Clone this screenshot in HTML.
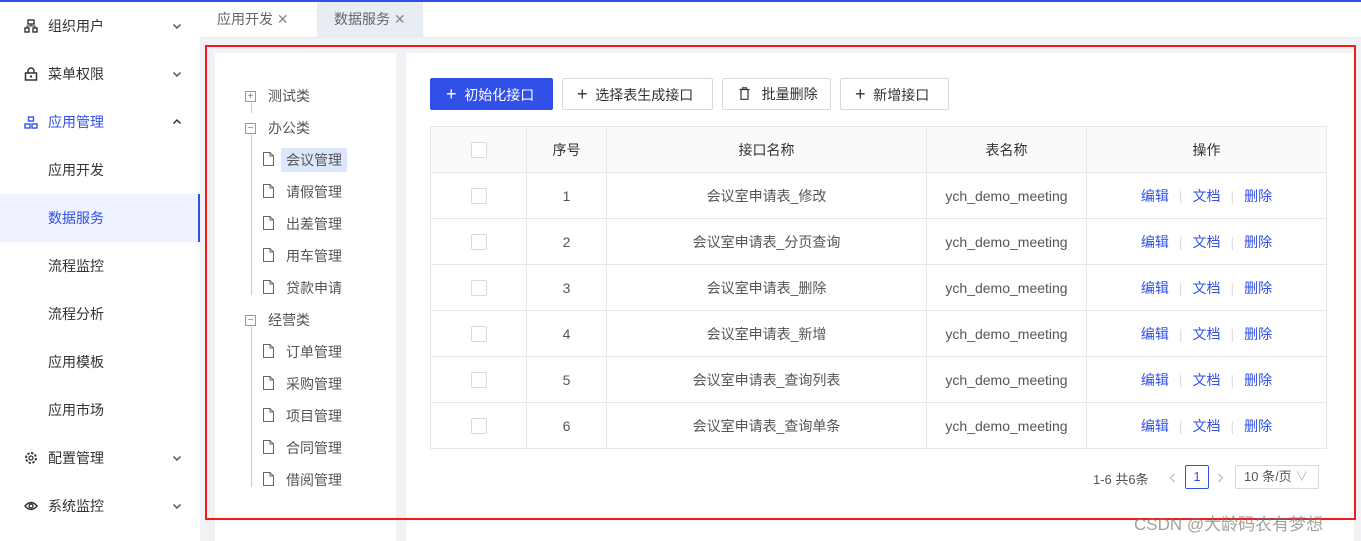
<!DOCTYPE html>
<html><head><meta charset="utf-8"><style>
*{margin:0;padding:0;box-sizing:border-box}
body{width:1361px;height:541px;overflow:hidden;background:#f0f2f5;font-family:"Liberation Sans","Noto Sans CJK SC",sans-serif;font-size:14px;color:#333;position:relative}
.abs{position:absolute}
.topline{left:0;top:0;width:1361px;height:2px;background:#3050e8}
.side{left:0;top:2px;width:200px;height:539px;background:#fff}
.mi{position:absolute;left:0;width:198px;height:48px;line-height:48px;font-size:14px;color:#333}
.mi .t{position:absolute;left:48px}
.mi .ic{position:absolute;left:24px;top:17px;width:14px;height:14px}
.mi .ar{position:absolute;left:172px;top:20px;width:10px;height:8px}
.tabs{left:200px;top:2px;width:1161px;height:36px;background:#fff;border-bottom:1px solid #e8e8e8}
.tab{position:absolute;top:0;height:36px;line-height:34px;font-size:14px;color:#666;padding-left:17px}
.red{left:205px;top:45px;width:1151px;height:475px;border:2.5px solid #f21b1b}
.tree{left:215px;top:53px;width:181px;height:488px;background:#fff}
.main{left:406px;top:53px;width:948px;height:488px;background:#fff}
.tn{position:absolute;font-size:14px;color:#555;height:24px;line-height:24px}
.box{position:absolute;width:11px;height:11px;border:1px solid #999;font-size:10px;line-height:9px;text-align:center;color:#777}
.file{position:absolute;width:11px;height:14px}
.vl{position:absolute;width:1px;background:#ccc}
.btn{position:absolute;top:78px;height:32px;border:1px solid #d9d9d9;background:#fff;border-radius:2px;line-height:30px;font-size:14px;color:#333}
table{position:absolute;left:430px;top:126px;width:897px;border-collapse:collapse;font-size:14px}
td,th{border:1px solid #e8e8e8;height:46px;text-align:center;font-weight:normal;color:#555}
th{background:#fafafa;color:#333}
.cb{display:inline-block;width:16px;height:16px;border:1px solid #d9d9d9;border-radius:2px;vertical-align:middle;background:#fff}
.lk{color:#3050e8}
.sep{color:#ddd;margin:0 10px}
</style></head><body>
<svg width="0" height="0" style="position:absolute"><defs>
<symbol id="dn" viewBox="0 0 10 8"><path d="M1.5 2.5L5 6L8.5 2.5" fill="none" stroke="#555" stroke-width="1.5"/></symbol>
<symbol id="up" viewBox="0 0 10 8"><path d="M1.5 5.5L5 2L8.5 5.5" fill="none" stroke="#333" stroke-width="1.5"/></symbol>
<symbol id="fl" viewBox="0 0 11 14"><path d="M0.5 0.5H7L10.5 4V13.5H0.5Z M7 0.5V4H10.5" fill="none" stroke="#666"/></symbol>
</defs></svg>
<div class="abs topline"></div>
<div class="abs side">
 <div class="mi" style="top:0"><svg class="ic" viewBox="0 0 14 14"><rect x="4" y="1" width="6" height="4" fill="none" stroke="#333" stroke-width="1.4"/><rect x="1" y="9" width="4" height="4" fill="none" stroke="#333" stroke-width="1.4"/><rect x="9" y="9" width="4" height="4" fill="none" stroke="#333" stroke-width="1.4"/><path d="M7 5v2M3 9V7h8v2" stroke="#333" fill="none"/></svg><span class="t">组织用户</span><svg class="ar"><use href="#dn"/></svg></div>
 <div class="mi" style="top:48px"><svg class="ic" viewBox="0 0 14 14"><rect x="1.5" y="6" width="11" height="7" fill="none" stroke="#333" stroke-width="1.5"/><path d="M4 6V4a3 3 0 0 1 6 0v2" fill="none" stroke="#333" stroke-width="1.5"/><rect x="6" y="8.5" width="2" height="2" fill="#333"/></svg><span class="t">菜单权限</span><svg class="ar"><use href="#dn"/></svg></div>
 <div class="mi" style="top:96px;color:#3050e8"><svg class="ic" viewBox="0 0 14 14"><rect x="4.5" y="2" width="5" height="4" fill="none" stroke="#3050e8" stroke-width="1.4"/><rect x="1" y="9" width="5" height="4" fill="none" stroke="#3050e8" stroke-width="1.4"/><rect x="8" y="9" width="5" height="4" fill="none" stroke="#3050e8" stroke-width="1.4"/></svg><span class="t">应用管理</span><svg class="ar"><use href="#up"/></svg></div>
 <div class="mi" style="top:144px"><span class="t">应用开发</span></div>
 <div class="mi" style="top:192px;background:#eef3ff;color:#3050e8;border-right:2px solid #3050e8;width:200px"><span class="t">数据服务</span></div>
 <div class="mi" style="top:240px"><span class="t">流程监控</span></div>
 <div class="mi" style="top:288px"><span class="t">流程分析</span></div>
 <div class="mi" style="top:336px"><span class="t">应用模板</span></div>
 <div class="mi" style="top:384px"><span class="t">应用市场</span></div>
 <div class="mi" style="top:432px"><svg class="ic" viewBox="0 0 14 14"><circle cx="7" cy="7" r="5" fill="none" stroke="#333" stroke-width="1.8" stroke-dasharray="2.5 1.4"/><circle cx="7" cy="7" r="2" fill="none" stroke="#333" stroke-width="1.3"/></svg><span class="t">配置管理</span><svg class="ar"><use href="#dn"/></svg></div>
 <div class="mi" style="top:480px"><svg class="ic" viewBox="0 0 14 14"><path d="M1 7Q7 0 13 7Q7 14 1 7Z" fill="none" stroke="#333" stroke-width="1.4"/><circle cx="7" cy="7" r="2" fill="none" stroke="#333" stroke-width="1.4"/></svg><span class="t">系统监控</span><svg class="ar"><use href="#dn"/></svg></div>
</div>
<div class="abs tabs">
 <div class="tab" style="left:0;width:117px">应用开发 <span style="color:#888">✕</span></div>
 <div class="tab" style="left:117px;width:106px;background:#e8ecf5;color:#666">数据服务 <span style="color:#888">✕</span></div>
</div>
<div class="abs tree">
 <div class="box" style="left:30px;top:38px">+</div><div class="tn" style="left:53px;top:31px">测试类</div>
 <div class="vl" style="left:36px;top:50px;height:10px"></div>
 <div class="box" style="left:30px;top:70px">−</div><div class="tn" style="left:53px;top:63px">办公类</div>
 <div class="vl" style="left:36px;top:82px;height:160px"></div>
 <svg class="file" style="left:48px;top:99px"><use href="#fl"/></svg><div class="tn" style="left:66px;top:95px;background:#dde7fb;padding:0 5px;border-radius:2px">会议管理</div>
 <svg class="file" style="left:48px;top:131px"><use href="#fl"/></svg><div class="tn" style="left:71px;top:127px">请假管理</div>
 <svg class="file" style="left:48px;top:163px"><use href="#fl"/></svg><div class="tn" style="left:71px;top:159px">出差管理</div>
 <svg class="file" style="left:48px;top:195px"><use href="#fl"/></svg><div class="tn" style="left:71px;top:191px">用车管理</div>
 <svg class="file" style="left:48px;top:227px"><use href="#fl"/></svg><div class="tn" style="left:71px;top:223px">贷款申请</div>
 <div class="box" style="left:30px;top:262px">−</div><div class="tn" style="left:53px;top:255px">经营类</div>
 <div class="vl" style="left:36px;top:274px;height:160px"></div>
 <svg class="file" style="left:48px;top:291px"><use href="#fl"/></svg><div class="tn" style="left:71px;top:287px">订单管理</div>
 <svg class="file" style="left:48px;top:323px"><use href="#fl"/></svg><div class="tn" style="left:71px;top:319px">采购管理</div>
 <svg class="file" style="left:48px;top:355px"><use href="#fl"/></svg><div class="tn" style="left:71px;top:351px">项目管理</div>
 <svg class="file" style="left:48px;top:387px"><use href="#fl"/></svg><div class="tn" style="left:71px;top:383px">合同管理</div>
 <svg class="file" style="left:48px;top:419px"><use href="#fl"/></svg><div class="tn" style="left:71px;top:415px">借阅管理</div>
</div>
<div class="abs main"></div>
<div class="btn" style="left:430px;width:123px;background:#3050e8;border-color:#3050e8;color:#fff;padding-left:15px"><b style="font-size:18px;font-weight:normal">+</b>&nbsp; 初始化接口</div>
<div class="btn" style="left:562px;width:151px;padding-left:14px"><span style="font-size:18px">+</span>&nbsp; 选择表生成接口</div>
<div class="btn" style="left:722px;width:109px;padding-left:16px"><svg width="11" height="13" viewBox="0 0 11 13" style="vertical-align:-1px"><path d="M0.5 2.5H10.5M3.5 2.5V0.8H7.5V2.5M2 2.5V12.3H9V2.5" fill="none" stroke="#333" stroke-width="1.2"/></svg>&nbsp;&nbsp; 批量删除</div>
<div class="btn" style="left:840px;width:109px;padding-left:14px"><span style="font-size:18px">+</span>&nbsp; 新增接口</div>
<table>
<tr><th style="width:96px"><span class="cb"></span></th><th style="width:80px">序号</th><th style="width:320px">接口名称</th><th style="width:160px">表名称</th><th>操作</th></tr>
<tr><td><span class="cb"></span></td><td>1</td><td>会议室申请表_修改</td><td>ych_demo_meeting</td><td><span class="lk">编辑</span><span class="sep">|</span><span class="lk">文档</span><span class="sep">|</span><span class="lk">删除</span></td></tr>
<tr><td><span class="cb"></span></td><td>2</td><td>会议室申请表_分页查询</td><td>ych_demo_meeting</td><td><span class="lk">编辑</span><span class="sep">|</span><span class="lk">文档</span><span class="sep">|</span><span class="lk">删除</span></td></tr>
<tr><td><span class="cb"></span></td><td>3</td><td>会议室申请表_删除</td><td>ych_demo_meeting</td><td><span class="lk">编辑</span><span class="sep">|</span><span class="lk">文档</span><span class="sep">|</span><span class="lk">删除</span></td></tr>
<tr><td><span class="cb"></span></td><td>4</td><td>会议室申请表_新增</td><td>ych_demo_meeting</td><td><span class="lk">编辑</span><span class="sep">|</span><span class="lk">文档</span><span class="sep">|</span><span class="lk">删除</span></td></tr>
<tr><td><span class="cb"></span></td><td>5</td><td>会议室申请表_查询列表</td><td>ych_demo_meeting</td><td><span class="lk">编辑</span><span class="sep">|</span><span class="lk">文档</span><span class="sep">|</span><span class="lk">删除</span></td></tr>
<tr><td><span class="cb"></span></td><td>6</td><td>会议室申请表_查询单条</td><td>ych_demo_meeting</td><td><span class="lk">编辑</span><span class="sep">|</span><span class="lk">文档</span><span class="sep">|</span><span class="lk">删除</span></td></tr>
</table>
<div class="abs" style="left:1093px;top:469px;font-size:13px;color:#555">1-6 共6条</div>
<svg class="abs" style="left:1169px;top:473px" width="7" height="10" viewBox="0 0 7 10"><path d="M5.5 1L1.5 5L5.5 9" fill="none" stroke="#bbb" stroke-width="1.2"/></svg>
<div class="abs" style="left:1185px;top:465px;width:24px;height:24px;border:1px solid #3050e8;border-radius:2px;color:#3050e8;text-align:center;line-height:22px;font-size:13px">1</div>
<svg class="abs" style="left:1217px;top:473px" width="7" height="10" viewBox="0 0 7 10"><path d="M1.5 1L5.5 5L1.5 9" fill="none" stroke="#bbb" stroke-width="1.2"/></svg>
<div class="abs" style="left:1235px;top:465px;width:84px;height:24px;border:1px solid #d9d9d9;border-radius:2px;font-size:13px;line-height:22px;padding-left:8px;color:#555">10 条/页 <span style="color:#bbb">∨</span></div>
<div class="abs red"></div>
<div class="abs" style="left:1134px;top:510px;font-size:17px;color:rgba(120,120,120,0.7)">CSDN @大龄码农有梦想</div>
</body></html>
